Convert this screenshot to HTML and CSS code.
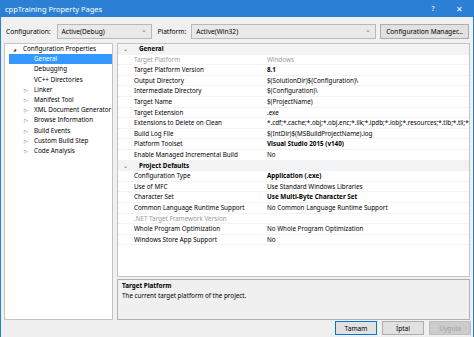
FILE: index.html
```html
<!DOCTYPE html>
<html lang="en">
<head>
  <meta charset="UTF-8" />
  <title>cppTraining Property Pages</title>
  <link rel="stylesheet" href="styles.css">
</head>
<body>
<div class="window">
  <div class="titlebar">
    <span class="title">cppTraining Property Pages</span>
    <span class="help">?</span>
    <span class="close">✕</span>
  </div>

  <div class="toolbar">
    <label class="lbl-config">Configuration:</label>
    <div class="combo combo-config">Active(Debug)<span class="arrow">⌄</span></div>
    <label class="lbl-platform">Platform:</label>
    <div class="combo combo-platform">Active(Win32)<span class="arrow">⌄</span></div>
    <button class="btn btn-manager">Configuration Manager...</button>
  </div>

  <div class="main">
    <ul class="tree">
      <li class="root"><span class="exp">◢</span>Configuration Properties</li>
      <li class="leaf selected">General</li>
      <li class="leaf">Debugging</li>
      <li class="leaf">VC++ Directories</li>
      <li class="node"><span class="col">▷</span>Linker</li>
      <li class="node"><span class="col">▷</span>Manifest Tool</li>
      <li class="node"><span class="col">▷</span>XML Document Generator</li>
      <li class="node"><span class="col">▷</span>Browse Information</li>
      <li class="node"><span class="col">▷</span>Build Events</li>
      <li class="node"><span class="col">▷</span>Custom Build Step</li>
      <li class="node"><span class="col">▷</span>Code Analysis</li>
    </ul>

    <div class="right">
      <div class="grid">
        <div class="row head"><span class="chev">⌄</span><span class="name">General</span></div>
        <div class="row off"><span class="name">Target Platform</span><span class="val">Windows</span></div>
        <div class="row"><span class="name">Target Platform Version</span><span class="val b">8.1</span></div>
        <div class="row"><span class="name">Output Directory</span><span class="val">$(SolutionDir)$(Configuration)\</span></div>
        <div class="row"><span class="name">Intermediate Directory</span><span class="val">$(Configuration)\</span></div>
        <div class="row"><span class="name">Target Name</span><span class="val">$(ProjectName)</span></div>
        <div class="row"><span class="name">Target Extension</span><span class="val">.exe</span></div>
        <div class="row"><span class="name">Extensions to Delete on Clean</span><span class="val">*.cdf;*.cache;*.obj;*.obj.enc;*.ilk;*.ipdb;*.iobj;*.resources;*.tlb;*.tli;*.t</span></div>
        <div class="row"><span class="name">Build Log File</span><span class="val">$(IntDir)$(MSBuildProjectName).log</span></div>
        <div class="row"><span class="name">Platform Toolset</span><span class="val b">Visual Studio 2015 (v140)</span></div>
        <div class="row"><span class="name">Enable Managed Incremental Build</span><span class="val">No</span></div>
        <div class="row head"><span class="chev">⌄</span><span class="name">Project Defaults</span></div>
        <div class="row"><span class="name">Configuration Type</span><span class="val b">Application (.exe)</span></div>
        <div class="row"><span class="name">Use of MFC</span><span class="val">Use Standard Windows Libraries</span></div>
        <div class="row"><span class="name">Character Set</span><span class="val b">Use Multi-Byte Character Set</span></div>
        <div class="row"><span class="name">Common Language Runtime Support</span><span class="val">No Common Language Runtime Support</span></div>
        <div class="row off"><span class="name">.NET Target Framework Version</span><span class="val"></span></div>
        <div class="row"><span class="name">Whole Program Optimization</span><span class="val">No Whole Program Optimization</span></div>
        <div class="row"><span class="name">Windows Store App Support</span><span class="val">No</span></div>
      </div>
      <div class="desc">
        <div class="desc-title">Target Platform</div>
        <div class="desc-text">The current target platform of the project.</div>
      </div>
    </div>
  </div>

  <div class="footer">
    <button class="btn btn-ok">Tamam</button>
    <button class="btn">İptal</button>
    <button class="btn btn-off">Uygula</button>
  </div>
</div>
</body>
</html>
```

FILE: styles.css
```css
* {
  box-sizing: border-box;
}

body {
  margin: 0;
  font-family: 'Noto Sans', 'Open Sans', sans-serif;
  font-size: 6.3px;
  color: #000;
  background: #fff;
}

.window {
  width: 474px;
  height: 337px;
  background: #f0f0f0;
  border-left: 1px solid #2b7fd4;
  border-right: 1px solid #2b7fd4;
  display: flex;
  flex-direction: column;
  overflow: hidden;
}

.titlebar {
  height: 17px;
  background: #2b7fd4;
  color: #fff;
  display: flex;
  align-items: center;
  padding-left: 4px;
  font-size: 7.5px;
}

.title {
  flex: 1;
}

.help {
  width: 26px;
  text-align: center;
  font-size: 7px;
}

.close {
  width: 27px;
  text-align: center;
  font-size: 8px;
}

.toolbar {
  height: 25px;
  display: flex;
  align-items: center;
  padding: 3px 4px 0 5px;
  font-size: 6.6px;
}

.lbl-platform {
  margin-left: 5px;
}

.combo {
  position: relative;
  height: 15px;
  line-height: 13px;
  border: 1px solid #b9b9b9;
  background: #e9e9e9;
  padding-left: 4px;
}

.combo-config {
  width: 96px;
  margin-left: 6px;
}

.combo-platform {
  width: 185px;
  margin-left: 5px;
}

.arrow {
  position: absolute;
  right: 4px;
  top: -2px;
  color: #777;
  font-size: 7px;
}

.btn {
  font-family: inherit;
  font-size: 6.6px;
  height: 15px;
  padding: 0;
  border: 1px solid #adadad;
  background: #e1e1e1;
  color: #000;
}

.btn-manager {
  width: 89px;
  margin-left: 4px;
}

.main {
  height: 278px;
  display: flex;
  padding: 1px 0 0 3px;
}

.tree {
  width: 109px;
  height: 277px;
  margin: 0;
  padding: 0;
  list-style: none;
  background: #fff;
  border: 1px solid #c4c4c4;
}

.tree li {
  height: 10.2px;
  line-height: 10.2px;
  white-space: nowrap;
  overflow: hidden;
}

.tree .root {
  padding-left: 8px;
}

.tree .exp {
  display: inline-block;
  width: 10px;
  font-size: 4px;
  color: #444;
}

.tree .leaf {
  padding-left: 29px;
}

.tree .node {
  padding-left: 19px;
}

.tree .col {
  display: inline-block;
  width: 10px;
  font-size: 5px;
  color: #555;
}

.tree .selected {
  margin-left: 4px;
  padding-left: 25px;
  background: #3399ff;
  color: #fff;
}

.right {
  width: 353px;
  margin-left: 4px;
  display: flex;
  flex-direction: column;
}

.grid {
  height: 235px;
  background: #fff;
  border: 1px solid #c4c4c4;
  overflow: hidden;
}

.row {
  height: 10.6px;
  line-height: 10.6px;
  display: flex;
  white-space: nowrap;
  border-bottom: 1px solid #f3f3f3;
}

.row .name {
  width: 148px;
  padding-left: 16px;
  flex-shrink: 0;
  overflow: hidden;
}

.row .val {
  flex: 1;
  overflow: hidden;
  padding-left: 1px;
}

.row.head {
  background: #f2f3f5;
  font-weight: bold;
}

.row.head .name {
  padding-left: 9px;
}

.chev {
  width: 7px;
  padding-left: 5px;
  box-sizing: content-box;
  font-weight: normal;
  color: #555;
}

.row.off {
  color: #9a9a9a;
}

.b {
  font-weight: bold;
}

.desc {
  height: 41px;
  margin-top: 2px;
  border: 1px solid #b0b0b0;
  background: #f0f0f0;
  padding: 1px 4px;
}

.desc-title {
  font-weight: bold;
  line-height: 10px;
}

.desc-text {
  line-height: 10px;
}

.footer {
  display: flex;
  justify-content: flex-end;
  gap: 5px;
  padding: 1px 2px 0 0;
}

.footer .btn {
  width: 42px;
  height: 14px;
}

.btn-ok {
  border-color: #0078d7;
}

.btn-off {
  background: #cccccc;
  border-color: #bfbfbf;
  color: #a0a0a0;
}
```
